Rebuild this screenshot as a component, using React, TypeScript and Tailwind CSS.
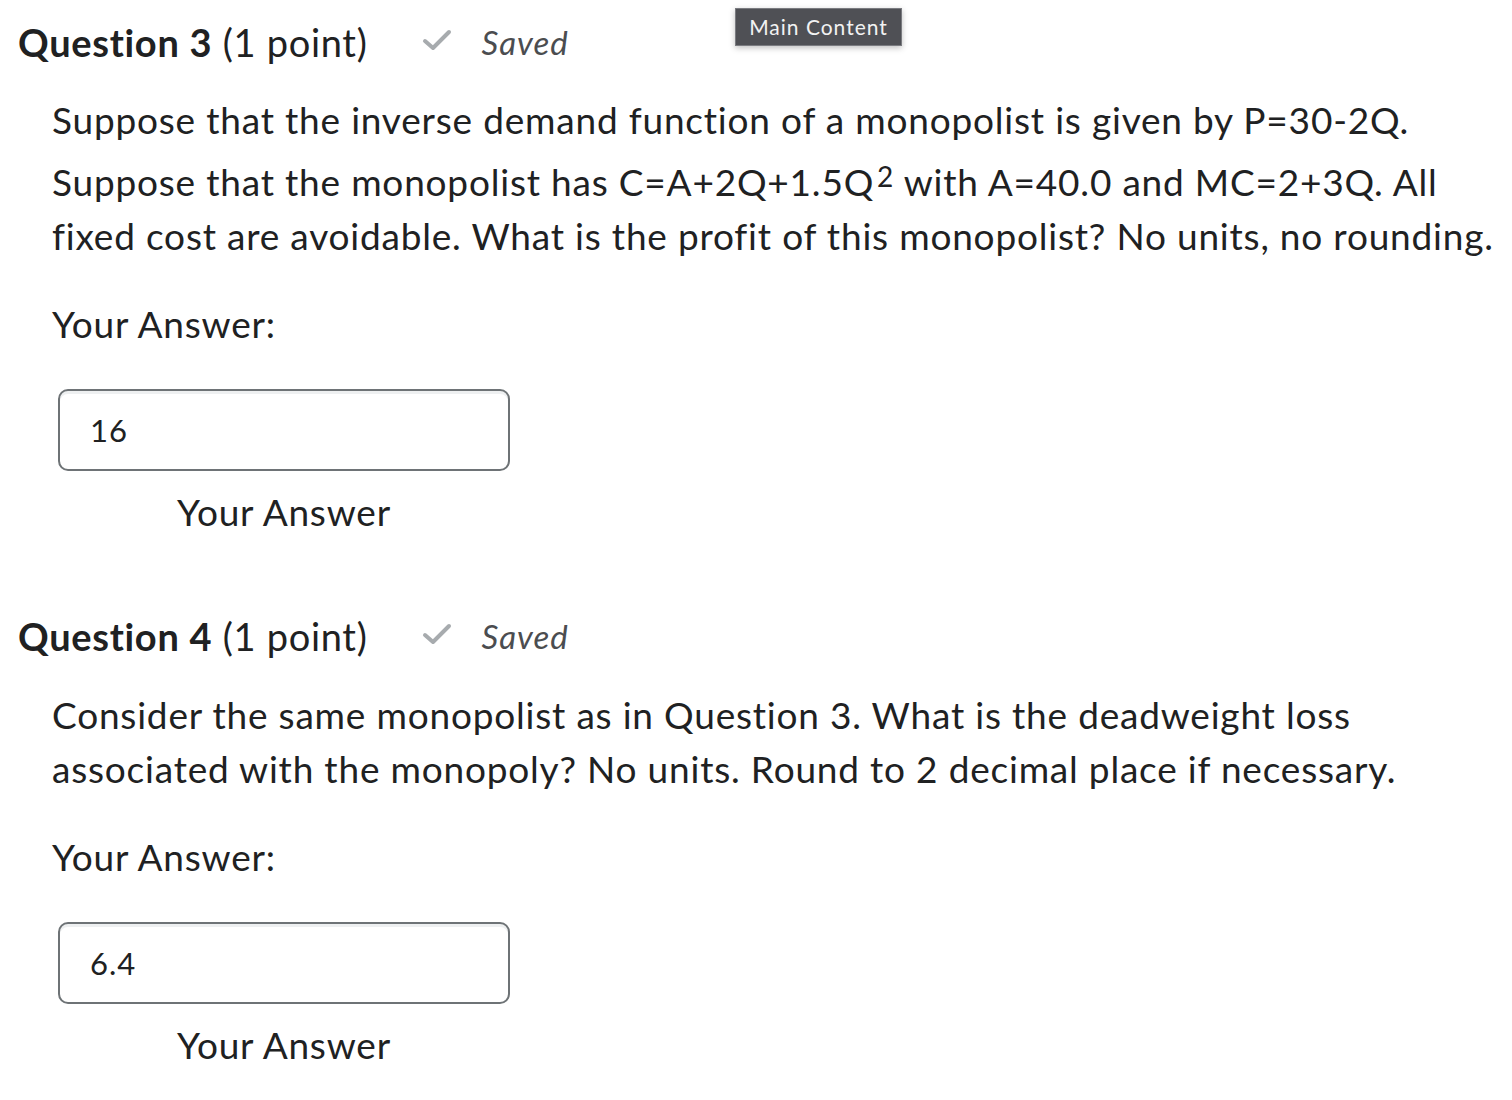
import React from 'react';

const lato = { fontFamily: 'Lato, "Noto Sans", sans-serif' };

const Check = () => (
  <svg width="30" height="24" viewBox="0 0 30 24" className="text-[#a7abae]">
    <path d="M3 13 L11 20 L27 4" fill="none" stroke="currentColor" strokeWidth="4" strokeLinecap="round" strokeLinejoin="round" />
  </svg>
);

interface QuestionProps {
  number: number;
  answer: string;
  first?: boolean;
  children: React.ReactNode;
}

const Question = ({ number, answer, first, children }: QuestionProps) => (
  <section>
    <div className="flex items-center h-[58px]">
      <h2 className="text-[38px] tracking-[0.7px] text-[#202122] leading-none">
        <span className="font-bold">Question {number}</span> (1 point)
      </h2>
      <span className="ml-[54px] mt-[-4px]"><Check /></span>
      <span className="ml-[30px] text-[33px] tracking-[1px] italic text-[#4b4d50] leading-none">Saved</span>
    </div>
    <div className={first ? 'pl-[34px] pt-[22px]' : 'pl-[34px] pt-[23px]'}>
      <div className="text-[37px] tracking-[0.8px] leading-[54px] text-[#202122]">{children}</div>
      <p className="mt-[34px] text-[37px] tracking-[0.8px] leading-[54px] text-[#202122]">Your Answer:</p>
      <div className="mt-[38px] ml-[6px] w-[452px] flex flex-col items-center">
        <div className="w-full h-[82px] rounded-[10px] border-2 border-[#6e7376] shadow-[inset_0_3px_0_#eef0f1] flex items-center px-[30px] text-[31px] tracking-[1px] text-[#202122]">
          {answer}
        </div>
        <div className="mt-[19px] text-[37px] tracking-[0.8px] leading-[44px] text-[#202122]">Your Answer</div>
      </div>
    </div>
  </section>
);

export default function App() {
  return (
    <div className="relative w-[1512px] h-[1100px] bg-white overflow-hidden pl-[18px] pt-[13px]" style={lato}>
      <div className="absolute left-[735px] top-[8px] h-[38px] w-[167px] bg-[#4f5055] border border-[#7a7b80] shadow-[0_2px_6px_rgba(0,0,0,0.25)] flex items-center justify-center text-[21px] tracking-[1px] text-[#f2f2f2]">
        Main Content
      </div>
      <Question number={3} answer="16" first>
        <p className="whitespace-nowrap">Suppose that the inverse demand function of a monopolist is given by P=30-2Q.</p>
        <p className="whitespace-nowrap mt-[8px]">
          Suppose that the monopolist has C=A+2Q+1.5Q<sup className="ml-[3px] text-[28px] top-[-9px]">2</sup> with A=40.0 and MC=2+3Q. All
        </p>
        <p className="whitespace-nowrap">fixed cost are avoidable. What is the profit of this monopolist? No units, no rounding.</p>
      </Question>
      <div className="h-[73px]" />
      <Question number={4} answer="6.4">
        <p className="whitespace-nowrap">Consider the same monopolist as in Question 3. What is the deadweight loss</p>
        <p className="whitespace-nowrap">associated with the monopoly? No units. Round to 2 decimal place if necessary.</p>
      </Question>
    </div>
  );
}
